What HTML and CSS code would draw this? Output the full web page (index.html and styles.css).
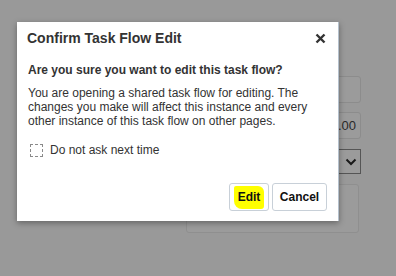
FILE: index.html
```html
<!DOCTYPE html>
<html lang="en">
<head>
    <meta charset="UTF-8">
    <meta name="viewport" content="width=device-width, initial-scale=1.0">
    <title>Confirm Task Flow Edit</title>
    <link rel="stylesheet" href="styles.css">
</head>
<body>
    <!-- Page behind the dialog (dimmed) -->
    <div class="page">
        <div class="field"></div>
        <div class="field field-number">.00</div>
        <div class="select">
            <span class="select-arrow">
                <svg width="12" height="8" viewBox="0 0 12 8"><path d="M1.5 1.5 L6 6 L10.5 1.5" fill="none" stroke="#1a1a1a" stroke-width="2"/></svg>
            </span>
        </div>
        <div class="field field-area"></div>
    </div>

    <!-- Dialog -->
    <div class="dialog">
        <div class="dialog-header">
            <h1>Confirm Task Flow Edit</h1>
            <span class="close">
                <svg width="11" height="11" viewBox="0 0 11 11"><path d="M1.5 1.5 L9.5 9.5 M9.5 1.5 L1.5 9.5" stroke="#333" stroke-width="2.4"/></svg>
            </span>
        </div>
        <div class="dialog-body">
            <p class="question">Are you sure you want to edit this task flow?</p>
            <p class="message">You are opening a shared task flow for editing. The changes you make will affect this instance and every other instance of this task flow on other pages.</p>
            <label class="check">
                <span class="check-box"></span>
                Do not ask next time
            </label>
        </div>
        <div class="dialog-footer">
            <button class="btn btn-edit"><span class="highlight">Edit</span></button>
            <button class="btn btn-cancel">Cancel</button>
        </div>
    </div>
</body>
</html>
```

FILE: styles.css
```css
/* Basic Styling */
body {
    margin: 0;
    padding: 0;
    background: #999999;
    font-family: "Liberation Sans", Arial, sans-serif;
    color: #333;
    width: 396px;
    height: 276px;
    overflow: hidden;
    position: relative;
}

/* Dimmed page behind the dialog */
.page {
    display: flex;
    flex-direction: column;
    padding: 76px 0 0 186px;
    width: 175px;
}

.field {
    height: 25px;
    border: 1px solid #8c8c8c;
    border-radius: 3px;
    background: #9b9b9b;
    margin-bottom: 9px;
}

.field-number {
    margin-bottom: 10px;
    font-size: 13px;
    line-height: 25px;
    text-align: right;
    padding-right: 4px;
    color: #2a2a2a;
}

.select {
    width: 173px;
    height: 23px;
    border: 1px solid #555;
    background: #9b9b9b;
    margin-bottom: 10px;
    display: flex;
    justify-content: flex-end;
}

.select-arrow {
    width: 18px;
    display: flex;
    align-items: center;
    justify-content: center;
}

.field-area {
    width: 171px;
    height: 47px;
    border-color: #8f8f8f;
    margin-bottom: 0;
}

/* Dialog */
.dialog {
    position: absolute;
    left: 17px;
    top: 22px;
    width: 321px;
    height: 199px;
    background: #fff;
    border-right: 1px solid #b4c0cc;
    box-shadow: 0 2px 6px rgba(0, 0, 0, 0.35);
    display: flex;
    flex-direction: column;
}

.dialog-header {
    display: flex;
    justify-content: space-between;
    align-items: center;
    padding: 8px 12px 8px 10px;
}

h1 {
    margin: 0;
    font-size: 14px;
    line-height: 16px;
    font-weight: bold;
    color: #333;
}

.close {
    display: flex;
}

.dialog-body {
    padding: 0 10px 0 11px;
    flex: 1;
}

.question {
    margin: 8px 0 0;
    font-size: 12px;
    line-height: 16px;
    font-weight: bold;
}

.message {
    margin: 8px 0 0;
    font-size: 12px;
    line-height: 14px;
}

.check {
    display: flex;
    align-items: center;
    gap: 7px;
    margin: 15px 0 0 2px;
    font-size: 12px;
    line-height: 14px;
}

.check-box {
    width: 11px;
    height: 11px;
    border: 1px dashed #8a8a8a;
}

.dialog-footer {
    display: flex;
    justify-content: flex-end;
    gap: 3px;
    padding: 0 11px 10px 0;
}

.btn {
    height: 28px;
    padding: 0;
    background: #fff;
    border: 1px solid #c8d0d8;
    border-radius: 3px;
    font-family: "Liberation Sans", Arial, sans-serif;
    font-size: 12px;
    font-weight: bold;
    color: #111;
}

.btn-edit {
    width: 40px;
}

.btn-cancel {
    width: 55px;
}

.highlight {
    display: inline-block;
    background: #ffff00;
    padding: 4px 4px 5px;
    border-radius: 2px 6px 3px 8px;
}
```
